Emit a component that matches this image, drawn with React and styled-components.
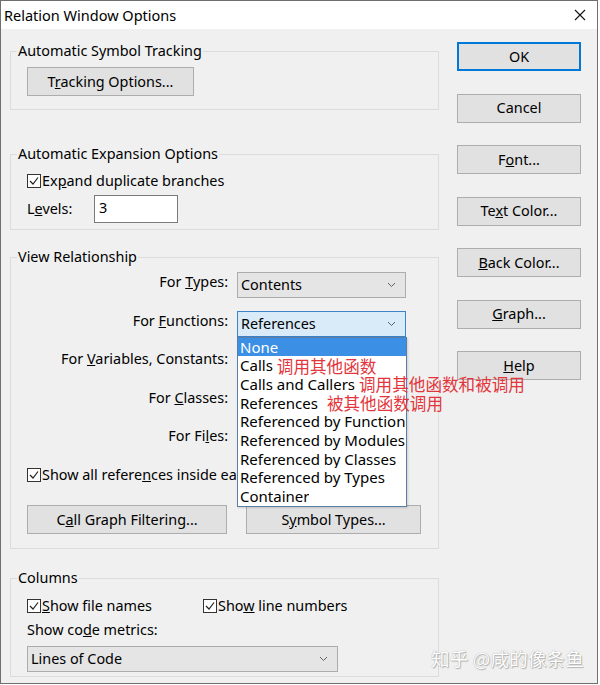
import styled, { createGlobalStyle } from "styled-components";

const Global = createGlobalStyle`
  html, body {
    margin: 0;
    padding: 0;
    background: #ffffff;
  }
  body {
    font-family: "Noto Sans", "Noto Sans CJK SC", sans-serif;
    font-size: 14.4px;
    color: #000;
  }
`;

const Window = styled.div`
  position: relative;
  width: 598px;
  height: 684px;
  box-sizing: border-box;
  border: 1px solid #6f6f6f;
  background: #f0f0f0;
  display: flex;
  flex-direction: column;
  overflow: hidden;
`;

const TitleBar = styled.div`
  height: 28px;
  flex: 0 0 28px;
  background: #ffffff;
  display: flex;
  align-items: center;
  justify-content: space-between;
  padding: 0 11px 0 3px;
`;

const TitleText = styled.span`
  font-size: 14.5px;
  line-height: 28px;
`;

const Body = styled.div`
  display: flex;
  padding: 12px 0 0 9px;
`;

const LeftCol = styled.div`
  width: 429px;
  display: flex;
  flex-direction: column;
`;

const RightCol = styled.div`
  margin-left: 18px;
  margin-top: 1px;
  display: flex;
  flex-direction: column;
  gap: 22.5px;
`;

const Group = styled.fieldset`
  margin: ${(p) => p.$top || 0}px 0 0 0;
  padding: ${(p) => p.$pad || "6px 15px 13px 16px"};
  border: 1px solid #dcdcdc;
  min-width: 0;
`;

const Legend = styled.legend`
  padding: 0 1px;
  margin-left: -10px;
  line-height: 20px;
`;

const Button = styled.button`
  font: inherit;
  color: #000;
  width: ${(p) => p.$w || 124}px;
  height: 29px;
  box-sizing: border-box;
  background: #e1e1e1;
  border: ${(p) => (p.$default ? "2px solid #0078d7" : "1px solid #adadad")};
  padding: 0;
  margin: 0;
  line-height: 20px;
`;

const Row = styled.div`
  display: flex;
  align-items: center;
  height: ${(p) => p.$h || 20}px;
  margin-top: ${(p) => p.$mt || 0}px;
`;

const Check = styled.label`
  display: flex;
  align-items: center;
  gap: 1px;
  line-height: 20px;
  white-space: nowrap;
  width: ${(p) => (p.$w ? `${p.$w}px` : "auto")};
`;

const ClipText = styled.span`
  display: block;
  max-width: ${(p) => p.$max}px;
  overflow: hidden;
  white-space: nowrap;
`;

const TextBox = styled.div`
  width: 84px;
  height: 28px;
  box-sizing: border-box;
  background: #fff;
  border: 1px solid #7a7a7a;
  padding: 2px 4px;
  line-height: 20px;
`;

const RelGrid = styled.div`
  display: grid;
  grid-template-columns: 201px 169px;
  column-gap: 9px;
  row-gap: 12.5px;
  grid-auto-rows: 26px;
`;

const RelLabel = styled.div`
  text-align: right;
  align-self: center;
  line-height: 20px;
  padding-bottom: 6px;
  white-space: nowrap;
`;

const ComboCell = styled.div`
  position: relative;
`;

const Combo = styled.div`
  width: ${(p) => p.$w || 169}px;
  height: 26px;
  box-sizing: border-box;
  background: ${(p) => (p.$focus ? "#d9eaf9" : "#e5e5e5")};
  border: 1px solid ${(p) => (p.$focus ? "#3f82c6" : "#acacac")};
  display: flex;
  align-items: center;
  justify-content: space-between;
  padding: 0 9px 0 3px;
  line-height: 20px;
`;

const DropList = styled.div`
  position: absolute;
  top: 100%;
  left: 0;
  width: 170px;
  box-sizing: border-box;
  background: #ffffff;
  border: 1px solid #5a7ea6;
  z-index: 10;
  font-size: 15px;
  box-shadow: 1px 1px 2px rgba(0, 0, 0, 0.15);
`;

const DropItem = styled.div`
  display: flex;
  align-items: center;
  height: 18.7px;
  padding-left: 2px;
  white-space: nowrap;
  background: ${(p) => (p.$active ? "#3b8fe4" : "transparent")};
  color: ${(p) => (p.$active ? "#ffffff" : "#000")};
`;

const ItemLabel = styled.span`
  flex-shrink: 0;
  max-width: 165px;
  overflow: hidden;
  line-height: 18.7px;
`;

const Note = styled.span`
  flex-shrink: 0;
  color: #e2363c;
  font-family: "Noto Sans CJK SC", sans-serif;
  font-size: 16.6px;
  line-height: 18px;
  margin-left: ${(p) => p.$ml || 4}px;
`;

const ButtonRow = styled.div`
  display: flex;
  gap: 19px;
  margin-top: 20px;
`;

const Watermark = styled.div`
  position: absolute;
  right: 13px;
  bottom: 12px;
  font-family: "Noto Sans CJK SC", sans-serif;
  font-size: 18.5px;
  color: #ffffff;
  text-shadow: 0 0 1px #9a9a9a, 1px 1px 1px #b4b4b4;
  letter-spacing: 0.2px;
  white-space: nowrap;
`;

function Chevron() {
  return (
    <svg width="9" height="6" viewBox="0 0 9 6">
      <polyline points="1,1 4.5,4.5 8,1" fill="none" stroke="#606060" strokeWidth="1" />
    </svg>
  );
}

function CloseIcon() {
  return (
    <svg width="12" height="12" viewBox="0 0 12 12">
      <path d="M1 1 L11 11 M11 1 L1 11" stroke="#111" strokeWidth="1.1" />
    </svg>
  );
}

function CheckBox() {
  return (
    <svg width="14" height="14" viewBox="0 0 14 14">
      <rect x="0.5" y="0.5" width="13" height="13" fill="#fff" stroke="#333" />
      <polyline points="3,7 6,10 11,3.5" fill="none" stroke="#222" strokeWidth="1.2" />
    </svg>
  );
}

const functionItems = [
  { label: "None", active: true },
  { label: "Calls", note: "调用其他函数" },
  { label: "Calls and Callers", note: "调用其他函数和被调用" },
  { label: "References", note: "被其他函数调用", ml: 9 },
  { label: "Referenced by Functions" },
  { label: "Referenced by Modules" },
  { label: "Referenced by Classes" },
  { label: "Referenced by Types" },
  { label: "Container" },
];

export default function App() {
  return (
    <>
      <Global />
      <Window>
        <TitleBar>
          <TitleText>Relation Window Options</TitleText>
          <CloseIcon />
        </TitleBar>
        <Body>
          <LeftCol>
            <Group>
              <Legend>Automatic Symbol Tracking</Legend>
              <Button $w={167}>
                T<u>r</u>acking Options...
              </Button>
            </Group>

            <Group $top={34} $pad="7px 15px 6px 16px">
              <Legend>Automatic Expansion Options</Legend>
              <Row>
                <Check>
                  <CheckBox />
                  <span>
                    Ex<u>p</u>and duplicate branches
                  </span>
                </Check>
              </Row>
              <Row $h={28} $mt={4}>
                <Check $w={67}>
                  <span>
                    L<u>e</u>vels:
                  </span>
                </Check>
                <TextBox>3</TextBox>
              </Row>
            </Group>

            <Group $top={17} $pad="5px 15px 14px 16px">
              <Legend>View Relationship</Legend>
              <RelGrid>
                <RelLabel>
                  For <u>T</u>ypes:
                </RelLabel>
                <ComboCell>
                  <Combo>
                    Contents
                    <Chevron />
                  </Combo>
                </ComboCell>
                <RelLabel>
                  For <u>F</u>unctions:
                </RelLabel>
                <ComboCell>
                  <Combo $focus>
                    References
                    <Chevron />
                  </Combo>
                  <DropList>
                    {functionItems.map((it) => (
                      <DropItem key={it.label} $active={it.active}>
                        <ItemLabel>{it.label}</ItemLabel>
                        {it.note && <Note $ml={it.ml}>{it.note}</Note>}
                      </DropItem>
                    ))}
                  </DropList>
                </ComboCell>
                <RelLabel>
                  For <u>V</u>ariables, Constants:
                </RelLabel>
                <ComboCell>
                  <Combo />
                </ComboCell>
                <RelLabel>
                  For <u>C</u>lasses:
                </RelLabel>
                <ComboCell>
                  <Combo />
                </ComboCell>
                <RelLabel>
                  For Fi<u>l</u>es:
                </RelLabel>
                <ComboCell>
                  <Combo />
                </ComboCell>
              </RelGrid>
              <Row $mt={13}>
                <Check>
                  <CheckBox />
                  <ClipText $max={195}>
                    Show all refere<u>n</u>ces inside each class
                  </ClipText>
                </Check>
              </Row>
              <ButtonRow>
                <Button $w={200}>
                  C<u>a</u>ll Graph Filtering...
                </Button>
                <Button $w={175}>
                  S<u>y</u>mbol Types...
                </Button>
              </ButtonRow>
            </Group>

            <Group $top={19} $pad="8px 15px 4px 16px">
              <Legend>Columns</Legend>
              <Row>
                <Check $w={176}>
                  <CheckBox />
                  <span>
                    <u>S</u>how file names
                  </span>
                </Check>
                <Check>
                  <CheckBox />
                  <span>
                    Sho<u>w</u> line numbers
                  </span>
                </Check>
              </Row>
              <Row $mt={3}>
                <span>
                  Show co<u>d</u>e metrics:
                </span>
              </Row>
              <Row $h={26} $mt={7}>
                <Combo $w={311}>
                  Lines of Code
                  <Chevron />
                </Combo>
              </Row>
            </Group>
          </LeftCol>

          <RightCol>
            <Button $default>OK</Button>
            <Button>Cancel</Button>
            <Button>
              F<u>o</u>nt...
            </Button>
            <Button>
              Te<u>x</u>t Color...
            </Button>
            <Button>
              <u>B</u>ack Color...
            </Button>
            <Button>
              <u>G</u>raph...
            </Button>
            <Button>
              <u>H</u>elp
            </Button>
          </RightCol>
        </Body>
        <Watermark>知乎 @咸的像条鱼</Watermark>
      </Window>
    </>
  );
}
